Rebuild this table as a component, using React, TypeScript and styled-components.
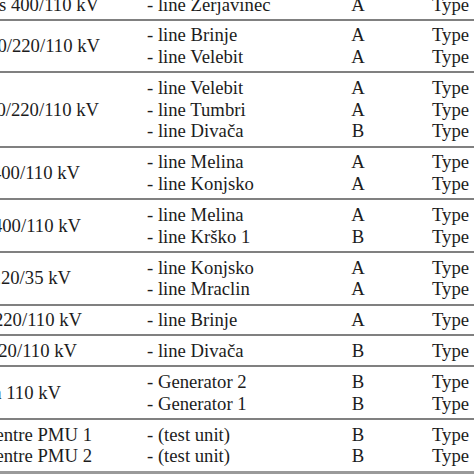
import styled, { createGlobalStyle } from "styled-components";

const GlobalStyle = createGlobalStyle`
  html, body {
    margin: 0;
    padding: 0;
    background: #ffffff;
    overflow: hidden;
  }
  body {
    font-family: "Liberation Serif", "DejaVu Serif", serif;
    color: #1c1c1c;
  }
`;

type Row = {
  station: string[];
  tail: number;
  lines: string[];
  classes: string[];
};

const rows: Row[] = [
  { station: ["TS Pécs 400/110 kV"], tail: 48, lines: ["- line Žerjavinec"], classes: ["A"] },
  { station: ["TS Konjsko 400/220/110 kV"], tail: 47, lines: ["- line Brinje", "- line Velebit"], classes: ["A", "A"] },
  {
    station: ["TS Melina 400/220/110 kV"],
    tail: 48,
    lines: ["- line Velebit", "- line Tumbri", "- line Divača"],
    classes: ["A", "A", "B"],
  },
  { station: ["TS Velebit 400/110 kV"], tail: 67, lines: ["- line Melina", "- line Konjsko"], classes: ["A", "A"] },
  { station: ["TS Tumbri 400/110 kV"], tail: 66, lines: ["- line Melina", "- line Krško 1"], classes: ["A", "B"] },
  { station: ["TS Brinje 220/35 kV"], tail: 76, lines: ["- line Konjsko", "- line Mraclin"], classes: ["A", "A"] },
  { station: ["TS Senj 220/110 kV"], tail: 65, lines: ["- line Brinje"], classes: ["A"] },
  { station: ["TS Pehlin 220/110 kV"], tail: 70, lines: ["- line Divača"], classes: ["B"] },
  { station: ["HE Dubrava 110 kV"], tail: 86, lines: ["- Generator 2", "- Generator 1"], classes: ["B", "B"] },
  {
    station: ["Control centre PMU 1", "Control centre PMU 2"],
    tail: 55,
    lines: ["- (test unit)", "- (test unit)"],
    classes: ["B", "B"],
  },
];

export default function App() {
  return (
    <>
      <GlobalStyle />
      <Table>
        {rows.map((row, i) => (
          <TableRow key={i} $last={i === rows.length - 1}>
            <StationCell>
              <StationText $tail={row.tail}>
                {row.station.map((s, j) => (
                  <Line key={j}>{s}</Line>
                ))}
              </StationText>
            </StationCell>
            <Cell>
              {row.lines.map((l, j) => (
                <Line key={j}>{l}</Line>
              ))}
            </Cell>
            <ClassCell>
              {row.classes.map((c, j) => (
                <Line key={j}>{c}</Line>
              ))}
            </ClassCell>
            <TypeCell>
              {row.classes.map((_, j) => (
                <Line key={j}>Type</Line>
              ))}
            </TypeCell>
          </TableRow>
        ))}
      </Table>
    </>
  );
}

const Table = styled.div`
  display: flex;
  flex-direction: column;
  width: 600px;
  margin-top: -10px;
  font-size: 18.7px;
`;

const TableRow = styled.div<{ $last: boolean }>`
  display: grid;
  grid-template-columns: 147px 178px 66px 1fr;
  align-items: center;
  padding: 3.6px 0;
  border-bottom: ${(p) => (p.$last ? "3px solid #9a9a9a" : "2px solid #808080")};
`;

const StationCell = styled.div`
  display: flex;
  justify-content: flex-end;
  overflow: hidden;
`;

const StationText = styled.div<{ $tail: number }>`
  flex-shrink: 0;
  padding-right: ${(p) => p.$tail}px;
  white-space: nowrap;
`;

const Cell = styled.div`
  white-space: nowrap;
`;

const ClassCell = styled.div`
  text-align: center;
`;

const TypeCell = styled.div`
  padding-left: 41px;
  white-space: nowrap;
`;

const Line = styled.div`
  line-height: 21.7px;
`;
